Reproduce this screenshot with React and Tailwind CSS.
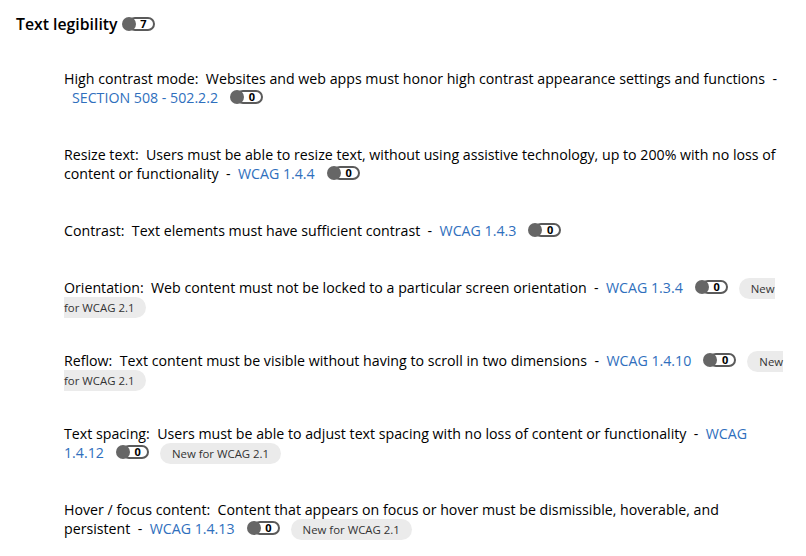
import React from 'react';

const rules = [
  {
    label: 'High contrast mode',
    text: 'Websites and web apps must honor high contrast appearance settings and functions',
    link: 'SECTION 508 - 502.2.2',
    count: 0,
    indent: true,
  },
  {
    label: 'Resize text',
    text: 'Users must be able to resize text, without using assistive technology, up to 200% with no loss of content or functionality',
    link: 'WCAG 1.4.4',
    count: 0,
  },
  {
    label: 'Contrast',
    text: 'Text elements must have sufficient contrast',
    link: 'WCAG 1.4.3',
    count: 0,
  },
  {
    label: 'Orientation',
    text: 'Web content must not be locked to a particular screen orientation',
    link: 'WCAG 1.3.4',
    count: 0,
    isNew: true,
  },
  {
    label: 'Reflow',
    text: 'Text content must be visible without having to scroll in two dimensions',
    link: 'WCAG 1.4.10',
    count: 0,
    isNew: true,
    tight: true,
  },
  {
    label: 'Text spacing',
    text: 'Users must be able to adjust text spacing with no loss of content or functionality',
    link: 'WCAG 1.4.12',
    count: 0,
    isNew: true,
    tight: true,
  },
  {
    label: 'Hover / focus content',
    text: 'Content that appears on focus or hover must be dismissible, hoverable, and persistent',
    link: 'WCAG 1.4.13',
    count: 0,
    isNew: true,
  },
];

// little pill with a dot on the left and the count on the right
const CountToggle = ({ count }) => (
  <span className="relative inline-block w-[33px] h-[14px] align-[-1px]">
    <span className="absolute left-[6px] right-0 top-0 h-[14px] rounded-full border-2 border-[#5a5a5a] bg-white" />
    <span className="absolute left-0 top-0 w-[14px] h-[14px] rounded-full bg-[#666666]" />
    <span className="absolute right-[8px] top-[-2px] text-[11px] leading-[17px] font-bold text-black">
      {count}
    </span>
  </span>
);

const RuleRow = ({ rule, first }) => (
  <p
    className={`text-[14.2px] leading-[19px] text-black ${
      first ? '' : rule.tight ? 'mt-[35px]' : 'mt-[38px]'
    }`}
  >
    {rule.label}:&nbsp; {rule.text}&nbsp; -&nbsp;{' '}
    <a href="#" className={`text-[#2f6fbd] ${rule.indent ? 'pl-2' : ''}`}>
      {rule.link}
    </a>
    <span className="inline-block w-3" />
    <CountToggle count={rule.count} />
    {rule.isNew && (
      <>
        <span className="inline-block w-[11px]" />
        <span className="bg-[#ebebeb] text-[#333333] text-[11.4px] leading-[14px] py-[3px] px-3 rounded-full">
          New for WCAG 2.1
        </span>
      </>
    )}
  </p>
);

export default function App() {
  return (
    <div
      className="min-h-screen bg-white pl-4 pr-[21px] pt-[12px]"
      style={{ fontFamily: '"Segoe UI", "Open Sans", sans-serif' }}
    >
      <div className="flex items-center gap-[4px] h-6">
        <h2 className="text-[15.8px] font-semibold text-black leading-6">Text legibility</h2>
        <CountToggle count={7} />
      </div>
      <div className="pl-12 mt-[33px] flex flex-col">
        {rules.map((rule, i) => (
          <RuleRow key={rule.label} rule={rule} first={i === 0} />
        ))}
      </div>
    </div>
  );
}
